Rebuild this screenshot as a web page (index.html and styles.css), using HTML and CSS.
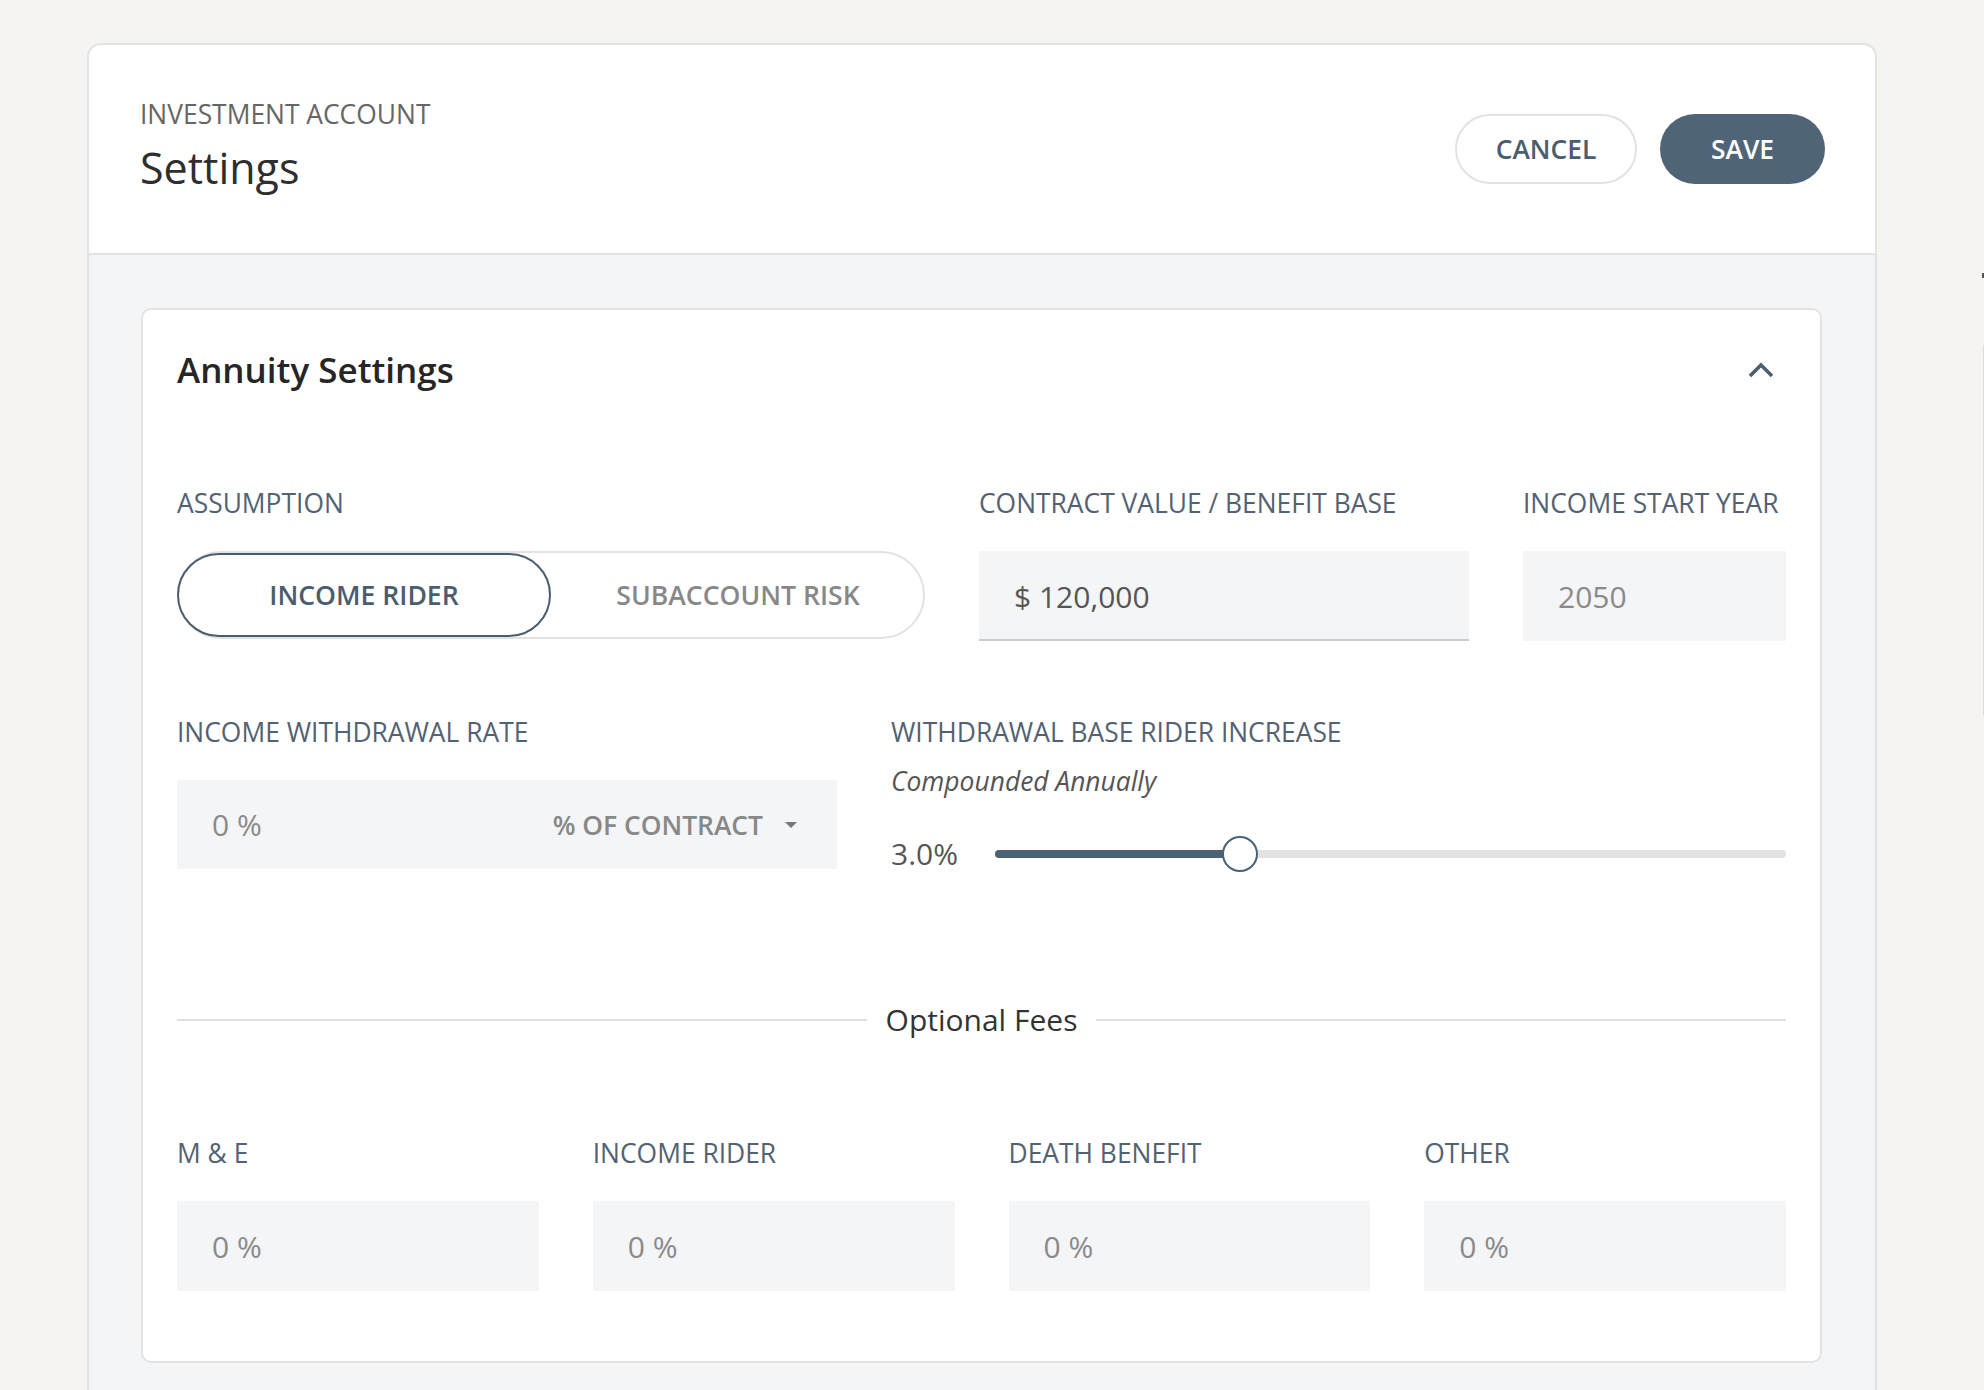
FILE: index.html
```html
<!DOCTYPE html>
<html lang="en">
<head>
  <meta charset="UTF-8">
  <title>Investment Account Settings</title>
  <link rel="stylesheet" href="styles.css">
</head>
<body>

  <div class="page">
    <div class="panel">
      <header class="panel-header">
        <div class="title-block">
          <div class="eyebrow">INVESTMENT ACCOUNT</div>
          <h1 class="title">Settings</h1>
        </div>
        <div class="actions">
          <button class="btn btn-outline">CANCEL</button>
          <button class="btn btn-primary">SAVE</button>
        </div>
      </header>

      <div class="panel-body">
        <section class="card">
          <div class="card-head">
            <h2>Annuity Settings</h2>
            <svg class="chevron" width="26" height="16" viewBox="0 0 26 16">
              <path d="M2 14 L13 3 L24 14" fill="none" stroke="#4b5f71" stroke-width="3.6"/>
            </svg>
          </div>

          <!-- first row -->
          <div class="row row-top">
            <div class="field">
              <div class="field-label">ASSUMPTION</div>
              <div class="toggle">
                <button class="toggle-opt active">INCOME RIDER</button>
                <button class="toggle-opt">SUBACCOUNT RISK</button>
              </div>
            </div>
            <div class="field">
              <div class="field-label">CONTRACT VALUE / BENEFIT BASE</div>
              <div class="input input-underline value-dark">$ 120,000</div>
            </div>
            <div class="field">
              <div class="field-label">INCOME START YEAR</div>
              <div class="input">2050</div>
            </div>
          </div>

          <!-- second row -->
          <div class="row row-mid">
            <div class="field">
              <div class="field-label">INCOME WITHDRAWAL RATE</div>
              <div class="input input-select">
                <span>0 %</span>
                <span class="select-part">% OF CONTRACT <span class="caret"></span></span>
              </div>
            </div>
            <div class="field">
              <div class="field-label">WITHDRAWAL BASE RIDER INCREASE</div>
              <div class="field-note">Compounded Annually</div>
              <div class="slider-row">
                <span class="slider-value">3.0%</span>
                <div class="slider">
                  <div class="slider-fill" style="width: 31%"></div>
                  <div class="slider-thumb" style="left: 31%"></div>
                </div>
              </div>
            </div>
          </div>

          <div class="divider">
            <span class="divider-line"></span>
            <span class="divider-text">Optional Fees</span>
            <span class="divider-line"></span>
          </div>

          <!-- fees -->
          <div class="row row-fees">
            <div class="field">
              <div class="field-label">M &amp; E</div>
              <div class="input">0 %</div>
            </div>
            <div class="field">
              <div class="field-label">INCOME RIDER</div>
              <div class="input">0 %</div>
            </div>
            <div class="field">
              <div class="field-label">DEATH BENEFIT</div>
              <div class="input">0 %</div>
            </div>
            <div class="field">
              <div class="field-label">OTHER</div>
              <div class="input">0 %</div>
            </div>
          </div>
        </section>
      </div>
    </div>
  </div>

  <div class="edge-mark"></div>
  <div class="edge-line"></div>

</body>
</html>
```

FILE: styles.css
```css
html, body {
  height: 100%;
  overflow: hidden;
}
body {
  margin: 0;
  background-color: #f5f4f0;
  font-family: "Open Sans", "Liberation Sans", sans-serif;
  color: #333;
}
button {
  font-family: inherit;
  cursor: pointer;
}
.page {
  padding: 43px 0 0 87px;
}
/* Outer panel */
.panel {
  width: 1790px;
  box-sizing: border-box;
  border: 2px solid #e3e3e3;
  border-radius: 14px;
  background-color: #fff;
  overflow: hidden;
}
.panel-header {
  height: 208px;
  display: flex;
  align-items: center;
  justify-content: space-between;
  padding: 0 50px 0 51px;
  border-bottom: 2px solid #e3e3e3;
}
.title-block {
  margin-bottom: 8px;
}
.eyebrow {
  font-size: 26.4px;
  line-height: 34px;
  color: #666;
}
.title {
  margin: 11px 0 0;
  font-size: 43px;
  line-height: 52px;
  font-weight: 400;
  color: #2e2e2e;
}
.actions {
  display: flex;
  gap: 23px;
}
.btn {
  height: 70px;
  border-radius: 35px;
  font-size: 26.4px;
  font-weight: 600;
  padding: 0;
}
.btn-outline {
  width: 182px;
  background-color: #fff;
  border: 2px solid #e2e2e2;
  color: #4a5d6e;
}
.btn-primary {
  width: 165px;
  background-color: #4f6477;
  border: none;
  color: #fff;
}
/* Body area */
.panel-body {
  background-color: #f4f5f7;
  padding: 53px 53px 60px 52px;
}
.card {
  background-color: #fff;
  border: 2px solid #e3e3e3;
  border-radius: 10px;
  padding: 36px 34px 70px;
}
.card-head {
  display: flex;
  align-items: center;
  justify-content: space-between;
  height: 48px;
  margin-bottom: 92px;
}
.card-head h2 {
  margin: 0;
  font-size: 35px;
  line-height: 48px;
  font-weight: 600;
  color: #262626;
}
.chevron {
  margin-right: 12px;
}
/* Rows */
.row {
  display: grid;
  column-gap: 54px;
}
.row-top {
  grid-template-columns: 748px 490px 1fr;
  margin-bottom: 74px;
}
.row-mid {
  grid-template-columns: 660px 1fr;
}
.row-fees {
  grid-template-columns: repeat(4, 1fr);
}
.field-label {
  font-size: 26.4px;
  line-height: 34px;
  color: #536272;
  white-space: nowrap;
  margin-bottom: 31px;
}
.input {
  height: 90px;
  box-sizing: border-box;
  background-color: #f4f5f7;
  padding: 0 35px;
  display: flex;
  align-items: center;
  font-size: 30px;
  color: #8a8a8a;
}
.value-dark {
  color: #555;
}
.input-underline {
  border-bottom: 2px solid #c9ccd1;
  padding-top: 2px;
}
.row-mid .input {
  height: 89px;
}
.input-select {
  justify-content: space-between;
  padding-right: 40px;
}
.select-part {
  display: flex;
  align-items: center;
  font-size: 26.4px;
  font-weight: 600;
  color: #888;
}
.caret {
  margin-left: 22px;
  width: 0;
  height: 0;
  border-left: 6px solid transparent;
  border-right: 6px solid transparent;
  border-top: 6px solid #777;
}
/* Toggle */
.toggle {
  display: flex;
  height: 88px;
  margin-top: 2px;
  box-sizing: border-box;
  border: 2px solid #e2e2e2;
  border-radius: 44px;
}
.toggle-opt {
  flex: 1;
  background: none;
  border: 2px solid transparent;
  border-radius: 42px;
  margin: 0 0 0 -2px;
  font-size: 26.6px;
  font-weight: 600;
  color: #888;
}
.toggle-opt.active {
  background-color: #fff;
  border-color: #4a5d6e;
  color: #4a5d6e;
}
.toggle-opt + .toggle-opt {
  margin: 0 -2px 0 0;
}
/* Slider */
.field-note {
  font-size: 26.4px;
  line-height: 34px;
  font-style: italic;
  color: #555;
  margin: -16px 0 38px;
}
.slider-row {
  display: flex;
  align-items: center;
  height: 36px;
}
.slider-value {
  width: 104px;
  font-size: 30px;
  line-height: 34px;
  color: #555;
}
.slider {
  position: relative;
  flex: 1;
  height: 8px;
  border-radius: 4px;
  background-color: #e3e3e3;
}
.slider-fill {
  height: 100%;
  border-radius: 4px;
  background-color: #4b6275;
}
.slider-thumb {
  position: absolute;
  top: 50%;
  width: 36px;
  height: 36px;
  box-sizing: border-box;
  border: 2.5px solid #4b6275;
  border-radius: 50%;
  background-color: #fff;
  transform: translate(-50%, -50%);
}
/* Divider */
.divider {
  display: flex;
  align-items: center;
  gap: 19px;
  margin: 128px 0 96px;
}
.divider-line {
  flex: 1;
  height: 2px;
  background-color: #e0e0e0;
}
.divider-text {
  font-size: 30px;
  line-height: 40px;
  color: #333;
}
/* Right-edge bits */
.edge-mark {
  position: absolute;
  right: 0;
  top: 273px;
  width: 2px;
  height: 5px;
  background-color: #555;
}
.edge-line {
  position: absolute;
  right: 0;
  top: 345px;
  width: 1px;
  height: 370px;
  background-color: #dcdcdc;
}
```
